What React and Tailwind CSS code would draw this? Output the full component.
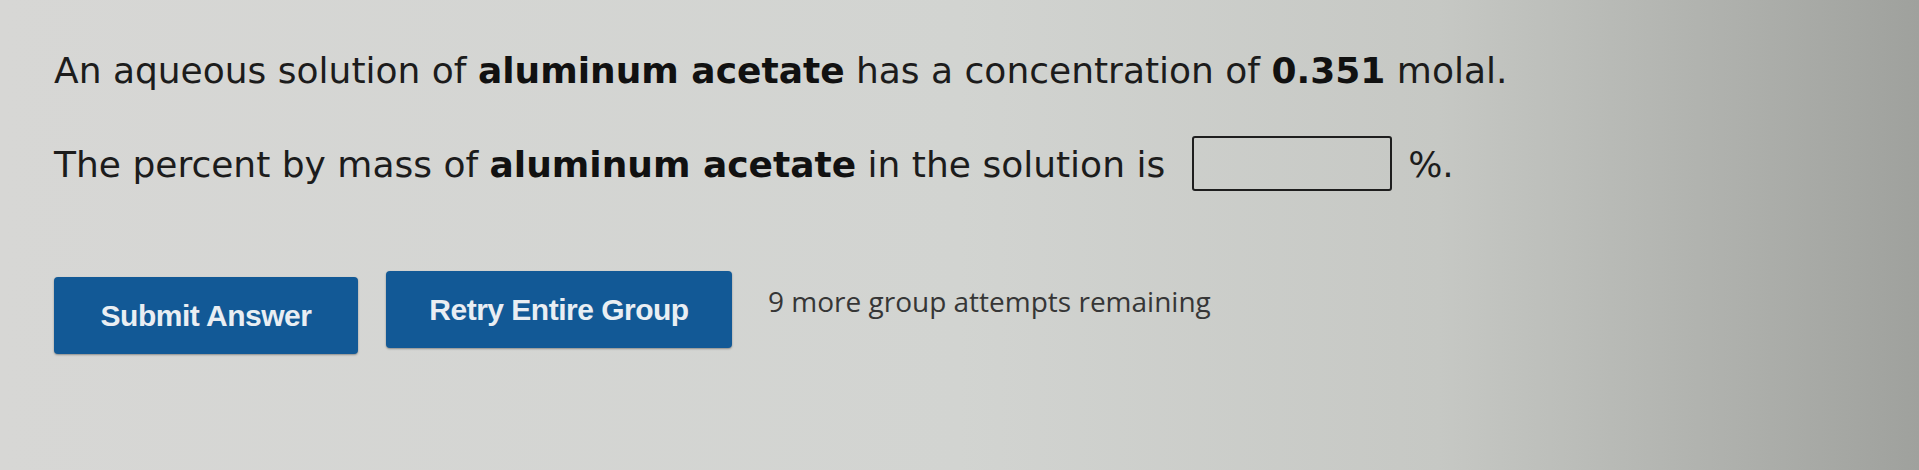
import React from 'react';

function Question() {
    return (
        <div className="flex flex-col text-[36px] leading-[44px] text-[#1c1c1c] font-['DejaVu_Sans',Verdana,sans-serif]">
            {/* Given */}
            <p className="mt-[49px] whitespace-nowrap">
                An aqueous solution of <b className="font-bold text-[#111]">aluminum acetate</b> has a concentration of{' '}
                <b className="font-bold text-[#111]">0.351</b> molal.
            </p>

            {/* Answer line */}
            <div className="mt-[43px] flex items-start whitespace-nowrap">
                <span className="mt-[7px]">
                    The percent by mass of <b className="font-bold text-[#111]">aluminum acetate</b> in the solution is
                </span>
                <input
                    type="text"
                    className="ml-[27px] h-[55px] w-[200px] rounded-[3px] border-2 border-[#1e1e1e] bg-transparent outline-none"
                />
                <span className="mt-[7px] ml-[16px]">%.</span>
            </div>
        </div>
    );
}

function Actions() {
    return (
        <div className="mt-[80px] flex items-start">
            <button className="mt-[6px] h-[77px] w-[304px] rounded-[4px] bg-[#125996] text-[30px] font-bold tracking-[-0.5px] text-[#e9eef3] font-['Liberation_Sans',Arial,sans-serif] shadow-[0_1px_2px_rgba(0,0,0,0.35)]">
                Submit Answer
            </button>
            <button className="ml-[28px] h-[77px] w-[346px] rounded-[4px] bg-[#125996] text-[30px] font-bold tracking-[-0.5px] text-[#e9eef3] font-['Liberation_Sans',Arial,sans-serif] shadow-[0_1px_2px_rgba(0,0,0,0.35)]">
                Retry Entire Group
            </button>
            <span className="ml-[36px] mt-[13px] text-[28px] leading-[34px] text-[#363636] font-['Open_Sans','Noto_Sans',sans-serif]">
                9 more group attempts remaining
            </span>
        </div>
    );
}

export default function App() {
    return (
        <div className="h-[470px] w-full overflow-hidden bg-[linear-gradient(90deg,#d7d7d5_0%,#d2d4d1_50%,#c6c8c4_75%,#9fa19d_100%)]">
            <div className="pl-[54px]">
                <Question />
                <Actions />
            </div>
        </div>
    );
}
